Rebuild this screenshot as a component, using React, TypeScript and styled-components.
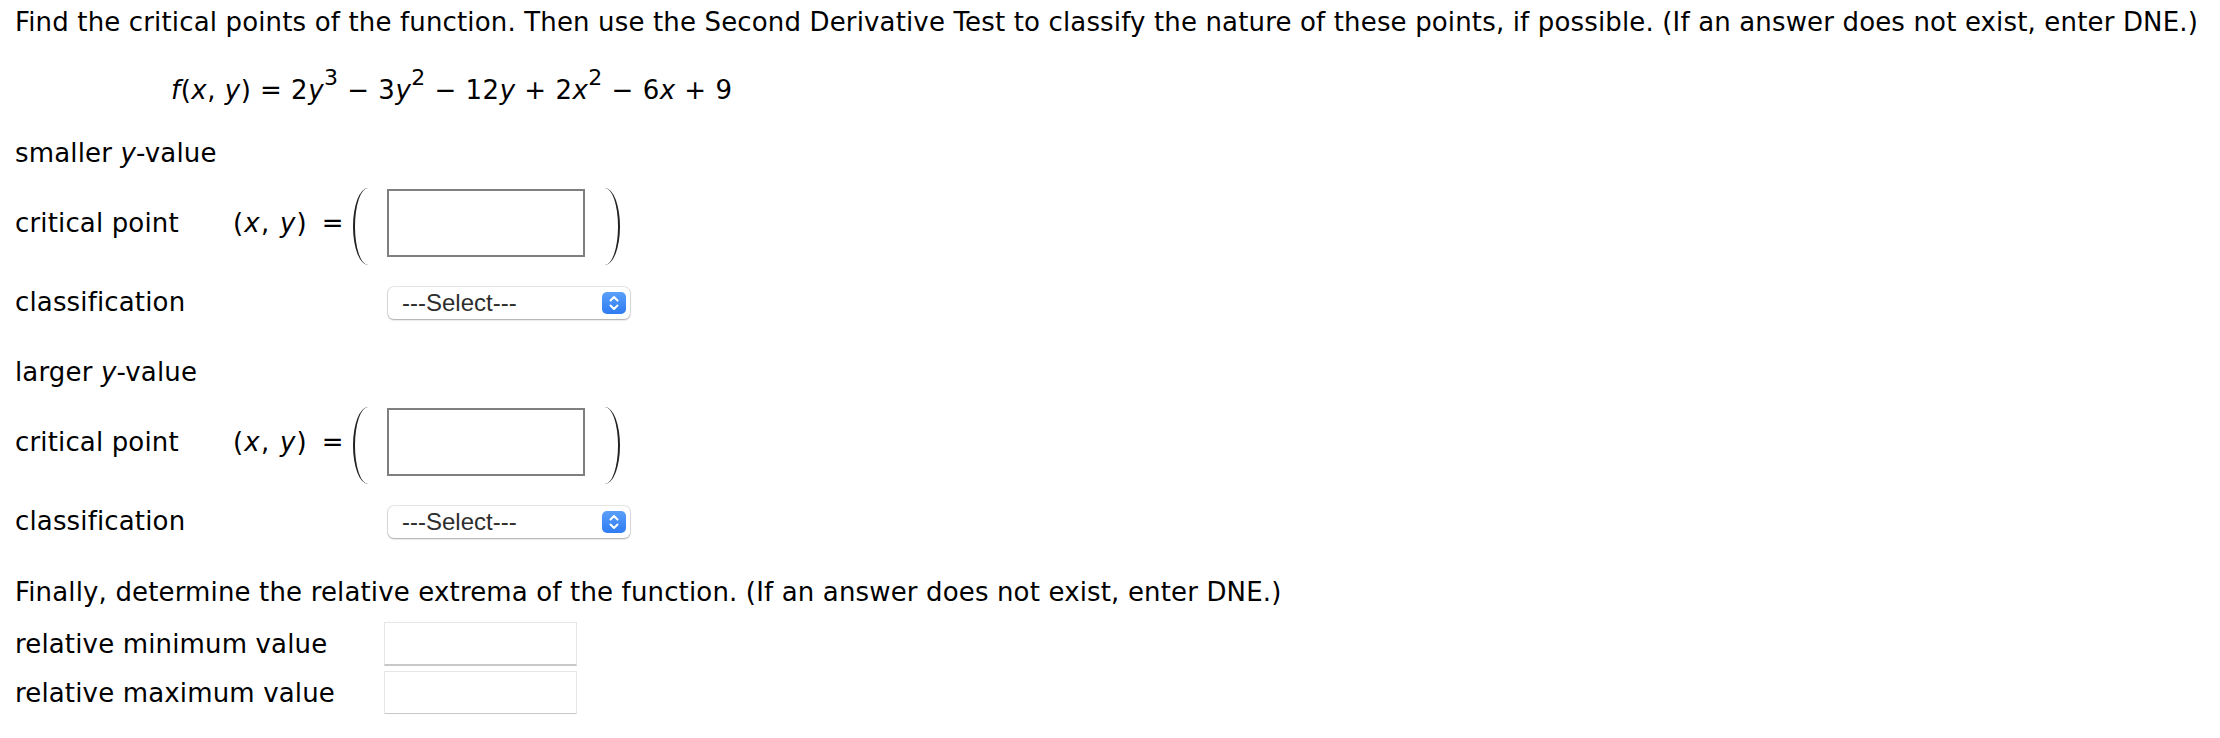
import React from "react";
import styled, { createGlobalStyle } from "styled-components";

const GlobalStyle = createGlobalStyle`
  html, body {
    margin: 0;
    padding: 0;
    background: #ffffff;
  }
  body {
    font-family: "DejaVu Sans", Verdana, sans-serif;
    font-size: 26px;
    letter-spacing: 0.15px;
    color: #000000;
  }
`;

const Page = styled.div`
  display: flex;
  flex-direction: column;
  align-items: flex-start;
  padding: 4px 0 0 15px;
  line-height: 36px;
  white-space: nowrap;
`;

const Prompt = styled.p`
  margin: 0;
  line-height: 36px;
`;

const Equation = styled.div`
  margin-top: 32px;
  padding-left: 156px;
  line-height: 36px;
  letter-spacing: 0.5px;
`;

const I = styled.i`
  font-style: italic;
`;

const Sup = styled.span`
  font-size: 22px;
  line-height: 0;
  vertical-align: 14px;
`;

const Heading = styled.div<{ $gap: number }>`
  margin-top: ${(p) => p.$gap}px;
  line-height: 36px;
`;

const CritRow = styled.div`
  display: flex;
  align-items: flex-start;
  height: 77px;
  margin-top: 17px;
`;

const RowLabel = styled.span<{ $w: number }>`
  display: block;
  width: ${(p) => p.$w}px;
  flex: none;
  line-height: 36px;
`;

const CritLabel = styled(RowLabel)`
  margin-top: 17px;
`;

const Expr = styled.span`
  display: flex;
  width: 120px;
  flex: none;
  margin-top: 17px;
  line-height: 36px;
`;

const Pair = styled.span`
  letter-spacing: 1.2px;
`;

const Equals = styled.span`
  margin-left: 14px;
`;

const Paren = styled.span<{ $side: "left" | "right" }>`
  display: block;
  flex: none;
  width: 15px;
  height: 77px;
  box-sizing: border-box;
  ${(p) =>
    p.$side === "left"
      ? `border-left: 2.6px solid #222;
         border-radius: 15px 0 0 15px / 38.5px 0 0 38.5px;`
      : `border-right: 2.6px solid #222;
         border-radius: 0 15px 15px 0 / 0 38.5px 38.5px 0;
         margin-left: 20px;`}
`;

const BigInput = styled.input`
  flex: none;
  box-sizing: border-box;
  width: 198px;
  height: 68px;
  margin: 1px 0 0 19px;
  padding: 0;
  border: 2px solid #7f7f7f;
  border-radius: 0;
  background: #fff;
  outline: none;
`;

const ClassRow = styled.div`
  display: flex;
  align-items: center;
  height: 36px;
  margin-top: 19px;
`;

const SelectBox = styled.div`
  display: flex;
  align-items: center;
  justify-content: space-between;
  box-sizing: border-box;
  width: 242px;
  height: 32px;
  margin-top: 2px;
  padding: 0 4px 0 14px;
  background: #ffffff;
  border-radius: 6px;
  box-shadow: 0 0 0 1px rgba(0, 0, 0, 0.09), 0 1px 2px rgba(0, 0, 0, 0.28);
  font-family: "Liberation Sans", Arial, sans-serif;
  font-size: 24px;
  letter-spacing: 0;
  color: #2e2e2e;
`;

const Stepper = styled.span`
  display: flex;
  align-items: center;
  justify-content: center;
  width: 24px;
  height: 22px;
  border-radius: 5px;
  background: linear-gradient(#5a9ff9, #2f7cf3);
`;

const RelRow = styled.div<{ $gap: number }>`
  display: flex;
  align-items: center;
  height: 43px;
  margin-top: ${(p) => p.$gap}px;
`;

const SmallInput = styled.input`
  flex: none;
  box-sizing: border-box;
  width: 193px;
  height: 44px;
  margin: 0;
  padding: 0;
  border: 1px solid #e6e6e6;
  border-bottom: 2px solid #c8c8c8;
  border-radius: 0;
  background: #fff;
  outline: none;
`;

const StepperIcon = () => (
  <svg width="24" height="22" viewBox="0 0 24 22" fill="none">
    <path d="M8.5 8.5 L12 5 L15.5 8.5" stroke="#fff" strokeWidth="2" strokeLinecap="round" strokeLinejoin="round" />
    <path d="M8.5 13.5 L12 17 L15.5 13.5" stroke="#fff" strokeWidth="2" strokeLinecap="round" strokeLinejoin="round" />
  </svg>
);

const Select = () => (
  <SelectBox role="combobox" aria-label="classification">
    <span>---Select---</span>
    <Stepper>
      <StepperIcon />
    </Stepper>
  </SelectBox>
);

const CriticalGroup = ({ which, gap }: { which: string; gap: number }) => (
  <>
    <Heading $gap={gap}>
      {which} <I>y</I>-value
    </Heading>
    <CritRow>
      <CritLabel $w={218}>critical point</CritLabel>
      <Expr>
        <Pair>
          (<I>x</I>, <I>y</I>)
        </Pair>
        <Equals>=</Equals>
      </Expr>
      <Paren $side="left" />
      <BigInput type="text" aria-label="critical point" />
      <Paren $side="right" />
    </CritRow>
    <ClassRow>
      <RowLabel $w={373}>classification</RowLabel>
      <Select />
    </ClassRow>
  </>
);

export default function App() {
  return (
    <>
      <GlobalStyle />
      <Page>
        <Prompt>
          Find the critical points of the function. Then use the Second Derivative Test to classify the nature of
          these points, if possible. (If an answer does not exist, enter DNE.)
        </Prompt>
        <Equation>
          <I>f</I>(<I>x</I>, <I>y</I>) = 2<I>y</I>
          <Sup>3</Sup> − 3<I>y</I>
          <Sup>2</Sup> − 12<I>y</I> + 2<I>x</I>
          <Sup>2</Sup> − 6<I>x</I> + 9
        </Equation>
        <CriticalGroup which="smaller" gap={27} />
        <CriticalGroup which="larger" gap={34} />
        <Heading $gap={35}>
          Finally, determine the relative extrema of the function. (If an answer does not exist, enter DNE.)
        </Heading>
        <RelRow $gap={12}>
          <RowLabel $w={369}>relative minimum value</RowLabel>
          <SmallInput type="text" aria-label="relative minimum value" />
        </RelRow>
        <RelRow $gap={6}>
          <RowLabel $w={369}>relative maximum value</RowLabel>
          <SmallInput type="text" aria-label="relative maximum value" />
        </RelRow>
      </Page>
    </>
  );
}
